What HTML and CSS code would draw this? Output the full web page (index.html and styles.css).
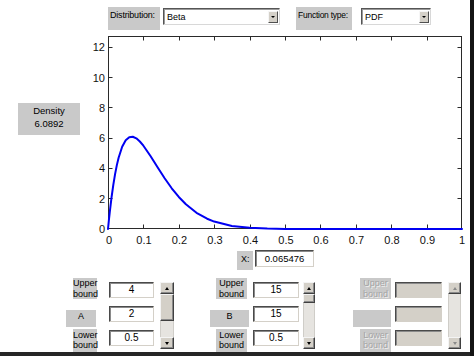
FILE: index.html
```html
<!DOCTYPE html>
<html>
<head>
<meta charset="utf-8">
<title>Distribution</title>
<link rel="stylesheet" href="styles.css">
</head>
<body>
<div class="window">
  <div class="main">
    <div class="top">
      <div class="lbl lbl-dist">Distribution:</div>
      <div class="select sel-dist"><span>Beta</span><i class="drop"></i></div>
      <div class="lbl lbl-fn">Function type:</div>
      <div class="select sel-fn"><span>PDF</span><i class="drop"></i></div>
    </div>

    <div class="plot-row">
      <div class="density"><div>Density</div><div>6.0892</div></div>
      <svg class="plot" viewBox="90 30 380 218" width="380" height="218">
        <rect x="108.5" y="36.5" width="353" height="192" fill="#fff" stroke="#2a2a2a" stroke-width="1"/>
        <path class="ticks" d="M143.5 228.5V224.5M179.5 228.5V224.5M214.5 228.5V224.5M250.5 228.5V224.5M285.5 228.5V224.5M320.5 228.5V224.5M356.5 228.5V224.5M391.5 228.5V224.5M427.5 228.5V224.5
          M143.5 36.5V40.5M179.5 36.5V40.5M214.5 36.5V40.5M250.5 36.5V40.5M285.5 36.5V40.5M320.5 36.5V40.5M356.5 36.5V40.5M391.5 36.5V40.5M427.5 36.5V40.5
          M108.5 198.5H112.5M108.5 168.5H112.5M108.5 138.5H112.5M108.5 107.5H112.5M108.5 77.5H112.5M108.5 47.5H112.5
          M461.5 198.5H457.5M461.5 168.5H457.5M461.5 138.5H457.5M461.5 107.5H457.5M461.5 77.5H457.5M461.5 47.5H457.5"/>
        <polyline class="curve" points="108,229 108.89,220.2 109.77,212.03 111.54,197.37 113.31,184.81 115.08,174.13 116.85,165.14 118.62,157.7 122.16,146.76 125.7,140.23 129.24,137.15 132.78,136.74 136.32,138.36 139.86,141.51 143.4,145.7 150.48,156.03 157.56,167.27 164.64,178.26 171.72,188.27 178.8,196.98 185.88,204.27 196.5,212.78 207.12,218.74 214.2,221.59 231.9,225.92 249.6,227.86 267.3,228.62 285,228.9 462,229"/>
        <g class="ylab">
          <text x="105" y="51">12</text>
          <text x="105" y="81.5">10</text>
          <text x="105" y="111.5">8</text>
          <text x="105" y="142">6</text>
          <text x="105" y="172">4</text>
          <text x="105" y="202.5">2</text>
          <text x="105" y="233">0</text>
        </g>
        <g class="xlab">
          <text x="109" y="244">0</text>
          <text x="144" y="244">0.1</text>
          <text x="179.5" y="244">0.2</text>
          <text x="215" y="244">0.3</text>
          <text x="250.5" y="244">0.4</text>
          <text x="286" y="244">0.5</text>
          <text x="321" y="244">0.6</text>
          <text x="356.5" y="244">0.7</text>
          <text x="392" y="244">0.8</text>
          <text x="427.5" y="244">0.9</text>
          <text x="462" y="244">1</text>
        </g>
      </svg>
    </div>

    <div class="x-row">
      <div class="lbl lbl-x">X:</div>
      <div class="edit edit-x">0.065476</div>
    </div>

    <div class="controls">
      <div class="group g1">
        <div class="bl bl-up">Upper<br>bound</div>
        <div class="bl bl-mid">A</div>
        <div class="bl bl-low">Lower<br>bound</div>
        <div class="edit e-up">4</div>
        <div class="edit e-mid">2</div>
        <div class="edit e-low">0.5</div>
        <div class="scroll">
          <div class="sb-btn up"></div>
          <div class="thumb t1"></div>
          <div class="track"></div>
          <div class="sb-btn down"></div>
        </div>
      </div>

      <div class="group g2">
        <div class="bl bl-up">Upper<br>bound</div>
        <div class="bl bl-mid">B</div>
        <div class="bl bl-low">Lower<br>bound</div>
        <div class="edit e-up">15</div>
        <div class="edit e-mid">15</div>
        <div class="edit e-low">0.5</div>
        <div class="scroll">
          <div class="sb-btn up"></div>
          <div class="thumb t2"></div>
          <div class="track"></div>
          <div class="sb-btn down"></div>
        </div>
      </div>

      <div class="group g3 disabled">
        <div class="bl bl-up">Upper<br>bound</div>
        <div class="bl bl-mid"></div>
        <div class="bl bl-low">Lower<br>bound</div>
        <div class="edit e-up"></div>
        <div class="edit e-mid"></div>
        <div class="edit e-low"></div>
        <div class="scroll">
          <div class="sb-btn up"></div>
          <div class="track"></div>
          <div class="sb-btn down"></div>
        </div>
      </div>
    </div>

    <div class="bottom-bar"></div>
  </div>
  <div class="right-bar"></div>
</div>
</body>
</html>
```

FILE: styles.css
```css
* { box-sizing: border-box; }
html, body { margin: 0; padding: 0; background: #fff; }
body { font-family: "Liberation Sans", Arial, sans-serif; color: #000; }

.window { display: flex; width: 474px; height: 356px; overflow: hidden; }
.main { width: 470px; display: flex; flex-direction: column; }
.right-bar { width: 4px; background: #141414; }
.bottom-bar { height: 4px; background: #262626; }

/* top row */
.top { height: 30px; display: flex; align-items: flex-start; padding: 7px 0 0 108px; }
.lbl { background: #c9c9c9; font-size: 9px; line-height: 11px; white-space: nowrap; }
.lbl-dist { width: 52px; height: 23px; padding: 3px 0 0 2px; letter-spacing: -0.2px; }
.lbl-fn { width: 56px; height: 23px; padding: 3px 0 0 2px; margin-left: 16px; font-size: 8.5px; letter-spacing: -0.25px; overflow: hidden; }

.select {
  display: flex; align-items: center; justify-content: space-between;
  height: 17px; margin-top: 1px; background: #fff;
  border-style: solid; border-width: 1px; border-color: #555 #d8d8d8 #d8d8d8 #555;
  box-shadow: inset 1px 1px 0 #9a9a9a;
  font-size: 9px; padding: 0 1px 0 3px;
}
.sel-dist { width: 117px; margin-left: 3px; }
.sel-fn { width: 70px; margin-left: 9px; }
.drop {
  width: 10px; height: 12px; background: #d4d0c8;
  border-style: solid; border-width: 1px; border-color: #f6f6f6 #505050 #505050 #f6f6f6;
  display: flex; align-items: center; justify-content: center;
}
.drop::after {
  content: ""; width: 0; height: 0;
  border-left: 2px solid transparent; border-right: 2px solid transparent; border-top: 2px solid #000;
}

/* plot row */
.plot-row { display: flex; height: 218px; padding-left: 18px; }
.density {
  width: 62px; height: 32px; margin-top: 73px; background: #c9c9c9;
  text-align: center; font-size: 9.5px; line-height: 13px; padding-top: 1px;
}
.plot { display: block; width: 380px; height: 218px; margin-left: 10px; }
.ticks { fill: none; stroke: #2a2a2a; stroke-width: 1; }
.curve { fill: none; stroke: #0000f2; stroke-width: 2; stroke-linejoin: round; stroke-linecap: round; }
.ylab text { font-size: 11px; text-anchor: end; fill: #111; }
.xlab text { font-size: 11px; text-anchor: middle; fill: #111; }

/* X row */
.x-row { display: flex; height: 20px; margin-top: 2px; padding-left: 237px; align-items: flex-start; }
.lbl-x { width: 16px; height: 19px; margin-top: 1px; padding: 3px 0 0 4px; }

.edit {
  background: #fff; height: 16px;
  border-style: solid; border-width: 1px; border-color: #4a4a4a #d4d0c8 #d4d0c8 #4a4a4a;
  box-shadow: inset 1px 1px 0 #8a8a8a;
  font-size: 10px; line-height: 14px; text-align: center;
}
.edit-x { width: 59px; height: 17px; margin-left: 2px; font-size: 9.5px; line-height: 15px; }

/* bottom controls */
.controls { display: flex; height: 74px; margin-top: 8px; padding-left: 66px; }
.group { display: grid; grid-template-rows: 24px 24px 26px; }
.g1 { grid-template-columns: 31px 57px 20px; }
.g2 { grid-template-columns: 39px 50px 16px; margin-left: 36px; }
.g3 { grid-template-columns: 38px 51px 19px; margin-left: 38px; }

.bl { grid-column: 1; background: #c9c9c9; font-size: 9px; text-align: center; justify-self: end; }
.bl-up { grid-row: 1; height: 21px; line-height: 11px; }
.bl-mid { grid-row: 2; height: 17px; margin-top: 8px; padding-top: 1px; line-height: 11px; justify-self: start; }
.bl-low { grid-row: 3; height: 23px; margin-top: 3px; line-height: 10px; padding-top: 1px; }

.g1 .bl-up, .g1 .bl-low { width: 24px; }
.g1 .bl-mid { width: 30px; }
.g2 .bl-up, .g2 .bl-low { width: 31px; margin-right: 2px; }
.g2 .bl-mid { width: 39px; }
.g3 .bl-up, .g3 .bl-low { width: 31px; }
.g3 .bl-mid { width: 38px; }

.group .edit { grid-column: 2; justify-self: end; margin-top: 4px; }
.e-up { grid-row: 1; }
.e-mid { grid-row: 2; }
.e-low { grid-row: 3; }
.g1 .edit { width: 45px; }
.g2 .edit { width: 46px; }
.g3 .edit { width: 47px; }

.scroll {
  grid-column: 3; grid-row: 1 / 4; justify-self: end; align-self: start;
  margin-top: 4px; height: 67px; display: flex; flex-direction: column;
}
.g1 .scroll { width: 14px; }
.g2 .scroll { width: 12px; }
.g3 .scroll { width: 13px; }

.sb-btn, .thumb {
  flex: none; background: #d4d0c8;
  border-style: solid; border-width: 1px; border-color: #f4f4f4 #404040 #404040 #f4f4f4;
  box-shadow: inset -1px -1px 0 #8a8a8a;
}
.sb-btn { height: 12px; display: flex; align-items: center; justify-content: center; }
.sb-btn::after { content: ""; width: 0; height: 0; border-left: 2.5px solid transparent; border-right: 2.5px solid transparent; }
.sb-btn.up::after { border-bottom: 3px solid #000; }
.sb-btn.down::after { border-top: 3px solid #000; }
.t1 { height: 27px; }
.t2 { height: 9px; }
.track { flex: 1; background: #e6e4e0; border-left: 1px solid #cfcdc8; border-right: 1px solid #cfcdc8; }

/* disabled group */
.disabled .bl { color: #a4a4a4; text-shadow: 1px 1px 0 #f0f0f0; }
.disabled .edit { background: #d4d0c8; }
.disabled .sb-btn.up::after { border-bottom-color: #8a8a8a; }
.disabled .sb-btn.down::after { border-top-color: #8a8a8a; }
```
